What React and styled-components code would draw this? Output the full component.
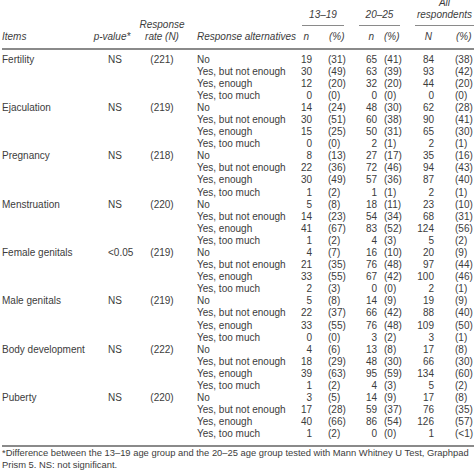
import React from 'react';
import styled, { createGlobalStyle } from 'styled-components';

const GlobalStyle = createGlobalStyle`
  body {
    margin: 0;
    background: #ffffff;
    font-family: "Liberation Sans", Arial, sans-serif;
    color: #3c3c3c;
    overflow: hidden;
  }
`;

const COLS = '86px 48px 52px 102px 22px 43px 22px 28px 29px 40px';

const Page = styled.div`
  width: 474px;
  margin-top: -3px;
  padding-left: 2px;
  box-sizing: border-box;
  font-size: 10px;
  line-height: 12px;
`;

const Head = styled.div`
  display: grid;
  grid-template-columns: ${COLS};
  grid-template-rows: 29px 21.5px;
  border-bottom: 2px solid #8a8a8a;
  font-style: italic;
`;

const HeadCell = styled.div`
  grid-column: ${p => p.$col};
  grid-row: ${p => p.$row || 2};
  align-self: end;
  white-space: nowrap;
  text-align: ${p => p.$align || 'left'};
  padding: ${p => p.$pad || '0'};
  padding-bottom: 5px;
`;

const Group = styled.div`
  grid-column: ${p => p.$col};
  grid-row: 1;
  align-self: end;
  white-space: nowrap;
  text-align: center;
  margin: ${p => p.$margin};
  padding-bottom: 4px;
  border-bottom: 1px solid #8a8a8a;
`;

const Body = styled.div`
  display: grid;
  grid-template-columns: ${COLS};
  grid-auto-rows: 12.1px;
  padding: 4px 0 4px;
  border-bottom: 2px solid #8a8a8a;
  line-height: 12.1px;
`;

const Cell = styled.div`
  white-space: nowrap;
  text-align: ${p => p.$align || 'left'};
  padding-left: ${p => p.$pl || 0}px;
`;

const Note = styled.div`
  font-size: 9.4px;
  line-height: 12px;
  white-space: nowrap;
`;

const ALTS = ['No', 'Yes, but not enough', 'Yes, enough', 'Yes, too much'];

const data = [
  ['Fertility', 'NS', '(221)', [[19, 31, 65, 41, 84, 38], [30, 49, 63, 39, 93, 42], [12, 20, 32, 20, 44, 20], [0, 0, 0, 0, 0, 0]]],
  ['Ejaculation', 'NS', '(219)', [[14, 24, 48, 30, 62, 28], [30, 51, 60, 38, 90, 41], [15, 25, 50, 31, 65, 30], [0, 0, 2, 1, 2, 1]]],
  ['Pregnancy', 'NS', '(218)', [[8, 13, 27, 17, 35, 16], [22, 36, 72, 46, 94, 43], [30, 49, 57, 36, 87, 40], [1, 2, 1, 1, 2, 1]]],
  ['Menstruation', 'NS', '(220)', [[5, 8, 18, 11, 23, 10], [14, 23, 54, 34, 68, 31], [41, 67, 83, 52, 124, 56], [1, 2, 4, 3, 5, 2]]],
  ['Female genitals', '<0.05', '(219)', [[4, 7, 16, 10, 20, 9], [21, 35, 76, 48, 97, 44], [33, 55, 67, 42, 100, 46], [2, 3, 0, 0, 2, 1]]],
  ['Male genitals', 'NS', '(219)', [[5, 8, 14, 9, 19, 9], [22, 37, 66, 42, 88, 40], [33, 55, 76, 48, 109, 50], [0, 0, 3, 2, 3, 1]]],
  ['Body development', 'NS', '(222)', [[4, 6, 13, 8, 17, 8], [18, 29, 48, 30, 66, 30], [39, 63, 95, 59, 134, 60], [1, 2, 4, 3, 5, 2]]],
  ['Puberty', 'NS', '(220)', [[3, 5, 14, 9, 17, 8], [17, 28, 59, 37, 76, 35], [40, 66, 86, 54, 126, 57], [1, 2, 0, 0, 1, '<1']]],
];

function pct(v) {
  return `(${v})`;
}

export default function App() {
  return (
    <Page>
      <GlobalStyle />
      <Head>
        <Group $col="5 / 7" $margin="0 11px 0 12px">13–19</Group>
        <Group $col="7 / 9" $margin="0 5px 0 4px">20–25</Group>
        <Group $col="9 / 11" $margin="0 0 0 10px">All<br />respondents</Group>
        <HeadCell $col="1">Items</HeadCell>
        <HeadCell $col="2" $align="center">p-value*</HeadCell>
        <HeadCell $col="3" $row="1 / 3" $align="center">Response<br />rate (N)</HeadCell>
        <HeadCell $col="4" $pad="0 0 0 9px">Response alternatives</HeadCell>
        <HeadCell $col="5" $align="right" $pad="0 3px 0 0">n</HeadCell>
        <HeadCell $col="6" $pad="0 0 0 17px">(%)</HeadCell>
        <HeadCell $col="7" $align="right" $pad="0 3px 0 0">n</HeadCell>
        <HeadCell $col="8" $pad="0 0 0 7px">(%)</HeadCell>
        <HeadCell $col="9" $align="right" $pad="0 2px 0 0">N</HeadCell>
        <HeadCell $col="10" $pad="0 0 0 22px">(%)</HeadCell>
      </Head>
      <Body>
        {data.map(([item, p, rate, rows]) =>
          rows.map((r, i) => (
            <React.Fragment key={item + i}>
              <Cell>{i === 0 ? item : ''}</Cell>
              <Cell $pl={20}>{i === 0 ? p : ''}</Cell>
              <Cell $align="center">{i === 0 ? rate : ''}</Cell>
              <Cell $pl={9}>{ALTS[i]}</Cell>
              <Cell $align="right">{r[0]}</Cell>
              <Cell $pl={16}>{pct(r[1])}</Cell>
              <Cell $align="right">{r[2]}</Cell>
              <Cell $pl={7}>{pct(r[3])}</Cell>
              <Cell $align="right">{r[4]}</Cell>
              <Cell $pl={21}>{pct(r[5])}</Cell>
            </React.Fragment>
          ))
        )}
      </Body>
      <Note>
        *Difference between the 13–19 age group and the 20–25 age group tested with Mann Whitney U Test, Graphpad<br />
        Prism 5. NS: not significant.
      </Note>
    </Page>
  );
}
